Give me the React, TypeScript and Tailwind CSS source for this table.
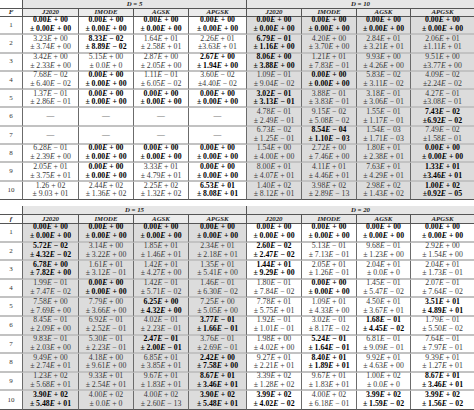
import React from 'react';

// each cell: "mean|std", leading "*" = best (bold)
const Z = '*0.00E + 00|± 0.00E + 00';
const DASH = '—';

const D5: string[][] = [
  [Z, Z, Z, Z],
  ['3.23E + 00|± 3.74E + 00', '*8.33E − 02|± 8.89E − 02', '1.64E + 01|± 2.58E + 01', '2.26E + 01|±3.63E + 01'],
  ['3.42E + 00|± 2.33E + 00', '5.15E + 00|± 0.0E + 0', '2.87E + 00|± 2.05E + 00', '*2.67E + 00|± 1.94E + 00'],
  ['7.68E − 02|± 6.40E − 02', Z, '1.11E − 01|± 6.05E − 02', '3.60E − 02|±4.40E − 02'],
  ['1.37E − 01|± 2.86E − 01', Z, Z, Z],
  [DASH, DASH, DASH, DASH],
  [DASH, DASH, DASH, DASH],
  ['6.28E − 01|± 2.39E + 00', Z, Z, Z],
  ['2.05E + 01|± 3.75E + 01', Z, '3.33E + 01|± 4.79E + 01', Z],
  ['1.26 + 02|± 9.03 + 01', '2.44E + 02|± 1.36E + 02', '2.25E + 02|± 1.32E + 02', '*6.53E + 01|± 8.08E + 01'],
];

const D10: string[][] = [
  [Z, Z, Z, Z],
  ['*6.79E − 01|± 1.16E + 00', '4.20E + 00|± 3.70E + 00', '2.84E + 01|± 3.21E + 01', '2.06E + 01|±1.11E + 01'],
  ['*8.06E + 00|± 3.88E + 00', '1.21E + 01|± 7.83E − 01', '9.93E + 00|± 4.26E + 00', '9.51E + 00|±3.77E + 00'],
  ['1.09E − 01|± 9.04E − 02', Z, '5.83E − 02|± 3.11E − 02', '4.09E − 02|±2.24E − 02'],
  ['*3.02E − 01|± 3.13E − 01', '3.88E − 01|± 3.83E − 01', '3.18E − 01|± 3.06E − 01', '4.27E − 01|±3.08E − 01'],
  ['4.78E − 01|± 2.49E − 01', '9.15E − 02|± 5.08E − 02', '1.55E − 01|± 1.17E − 01', '*7.43E − 02|±6.92E − 02'],
  ['6.73E − 02|± 1.25E − 01', '*8.54E − 04|± 1.10E − 03', '1.54E − 03|± 1.71E − 03', '7.49E − 02|±1.58E − 01'],
  ['1.54E + 00|± 4.00E + 00', '2.72E + 00|± 7.46E + 00', '1.80E + 01|± 2.38E + 01', Z],
  ['8.00E + 01|± 4.07E + 01', '4.11E + 01|± 4.46E + 01', '7.63E + 01|± 4.29E + 01', '*1.33E + 01|±3.46E + 01'],
  ['1.40E + 02|± 8.12E + 01', '3.98E + 02|± 2.89E − 13', '2.98E + 02|± 1.43E + 02', '*1.00E + 02|±0.92E − 05'],
];

const D15: string[][] = [
  [Z, Z, Z, Z],
  ['*5.72E − 02|± 4.32E − 02', '3.14E + 00|± 3.22E + 00', '1.85E + 01|± 1.46E + 01', '2.34E + 01|± 2.18E + 01'],
  ['*6.78E + 00|± 7.82E + 00', '1.61E + 01|± 3.12E − 01', '1.42E + 01|± 4.27E + 00', '1.35E + 01|± 5.41E + 00'],
  ['1.99E − 01|± 7.47E − 02', Z, '1.42E − 01|± 5.71E − 02', '1.46E − 01|± 6.30E − 02'],
  ['7.58E + 00|± 7.69E + 00', '7.79E + 00|± 3.66E + 00', '*6.25E + 00|± 4.32E + 00', '7.25E + 00|± 5.05E + 00'],
  ['8.45E − 01|± 2.09E + 00', '6.92E − 01|± 2.52E − 01', '4.02E − 01|± 2.23E − 01', '*3.77E − 01|± 1.66E − 01'],
  ['9.83E − 01|± 2.03E + 00', '5.30E − 01|± 2.23E − 01', '*2.47E − 01|± 2.00E − 01', '3.76E − 01|± 2.69E − 01'],
  ['9.49E + 00|± 2.74E + 01', '4.18E + 00|± 9.61E + 00', '6.85E + 01|± 3.85E + 01', '*2.42E + 00|± 7.58E + 00'],
  ['1.23E + 02|± 5.68E + 01', '9.33E + 01|± 2.54E + 01', '9.67E + 01|± 1.83E + 01', '*8.67E + 01|± 3.46E + 01'],
  ['*3.90E + 02|± 5.48E + 01', '4.00E + 02|± 0.0E + 0', '4.00E + 02|± 2.60E − 13', '*3.90E + 02|± 5.48E + 01'],
];

const D20: string[][] = [
  [Z, Z, Z, Z],
  ['*2.60E − 02|± 2.47E − 02', '5.13E − 01|± 7.13E − 01', '9.68E − 01|± 1.23E + 00', '2.92E + 00|± 1.54E + 00'],
  ['*1.44E + 01|± 9.29E + 00', '2.05E + 01|± 1.26E − 01', '2.04E + 01|± 0.0E + 0', '2.04E + 01|± 1.73E − 01'],
  ['1.80E − 01|± 7.84E − 02', Z, '1.45E − 01|± 5.47E − 02', '2.07E − 01|± 7.64E − 02'],
  ['7.78E + 01|± 5.75E + 01', '1.09E + 01|± 4.33E + 00', '4.50E + 01|± 3.67E + 01', '*3.51E + 01|± 4.89E + 01'],
  ['1.92E − 01|± 1.01E − 01', '3.02E − 01|± 8.17E − 02', '*1.68E − 01|± 4.45E − 02', '1.79E − 01|± 5.50E − 02'],
  ['1.98E + 00|± 4.02E + 00', '*5.24E − 01|± 1.64E − 01', '6.81E − 01|± 9.09E − 01', '7.64E − 01|± 7.97E − 01'],
  ['9.27E + 01|± 2.21E + 01', '*8.40E + 01|± 1.89E + 01', '9.92E + 01|± 4.63E + 00', '9.39E + 01|± 1.27E + 01'],
  ['3.39E + 02|± 1.28E + 02', '9.67E + 01|± 1.83E + 01', '1.00E + 02|± 0.0E + 0', '*8.67E + 01|± 3.46E + 01'],
  ['*3.99E + 02|± 4.02E − 02', '4.00E + 02|± 6.18E − 01', '*3.99E + 02|± 1.59E − 02', '*3.99E + 02|± 1.56E − 02'],
];

const ALGOS = ['J2020', 'IMODE', 'AGSK', 'APGSK'];

// italic E like the math font in the paper
const Num: React.FC<{ text: string }> = ({ text }) => {
  const parts = text.split('E');
  return (
    <>
      {parts.map((p, i) => (
        <React.Fragment key={i}>
          {i > 0 && <i>E</i>}
          {p}
        </React.Fragment>
      ))}
    </>
  );
};

const Value: React.FC<{ raw: string; last: boolean; shaded: boolean; edge?: boolean }> = ({ raw, last, shaded, edge }) => {
  const bold = raw.startsWith('*');
  const [mean, std] = (bold ? raw.slice(1) : raw).split('|');
  return (
    <div
      className={`flex flex-col items-center justify-center leading-[8.8px] text-[7.8px] border-r border-[#6b6b6b] ${
        last ? 'border-b border-b-[#555]' : 'border-b-2 border-b-[#c2c2c2]'
      } ${shaded ? 'bg-[#dcdcdc]' : 'bg-white'} ${edge ? 'border-r-0' : ''} ${
        bold ? 'font-bold text-black' : 'text-[#3a3a3a]'
      }`}
    >
      {std === undefined ? (
        <span className="text-[#777]">{mean}</span>
      ) : (
        <>
          <span className="whitespace-nowrap"><Num text={mean} /></span>
          <span className="whitespace-nowrap"><Num text={std} /></span>
        </>
      )}
    </div>
  );
};

interface SectionProps {
  left: { d: string; rows: string[][]; shaded: boolean };
  right: { d: string; rows: string[][]; shaded: boolean; headShaded: boolean };
  fLabel: string;
  rowsClass: string;
}

const Section: React.FC<SectionProps> = ({ left, right, fLabel, rowsClass }) => (
  <div className={`grid grid-cols-[23px_56px_55px_55px_58px_55px_55px_54px_63px] ${rowsClass}`}>
    {/* D row */}
    <div className="bg-white border-r border-b border-[#555]" />
    <div className="col-span-4 flex items-center justify-center bg-[#e6e6e6] border-r border-b border-[#555] text-[6.8px] italic font-bold text-[#222]">
      D = {left.d}
    </div>
    <div className="col-span-4 flex items-center justify-center bg-[#e6e6e6] border-b border-[#555] text-[6.8px] italic font-bold text-[#222]">
      D = {right.d}
    </div>

    {/* header row */}
    <div className="flex items-center justify-center bg-white border-r border-b border-[#555] text-[7px] italic font-bold">
      {fLabel}
    </div>
    {ALGOS.map((a) => (
      <div
        key={'l' + a}
        className="flex items-center justify-center bg-[#ececec] border-r border-b border-[#555] text-[6.8px] italic font-bold text-[#222]"
      >
        {a}
      </div>
    ))}
    {ALGOS.map((a, i) => (
      <div
        key={'r' + a}
        className={`flex items-center justify-center border-b border-[#555] text-[6.8px] italic font-bold text-[#222] ${
          right.headShaded ? 'bg-[#e6e6e6]' : 'bg-white'
        } ${i < 3 ? 'border-r' : ''}`}
      >
        {a}
      </div>
    ))}

    {/* data rows */}
    {left.rows.map((row, r) => {
      const last = r === left.rows.length - 1;
      return (
        <React.Fragment key={r}>
          <div
            className={`flex items-center justify-center bg-white text-[7px] text-[#333] border-r border-[#6b6b6b] ${
              last ? 'border-b border-b-[#555]' : 'border-b-2 border-b-[#c2c2c2]'
            }`}
          >
            {r + 1}
          </div>
          {row.map((c, i) => (
            <Value key={'l' + i} raw={c} last={last} shaded={left.shaded} />
          ))}
          {right.rows[r].map((c, i) => (
            <Value key={'r' + i} raw={c} last={last} shaded={right.shaded} edge={i === 3} />
          ))}
        </React.Fragment>
      );
    })}
  </div>
);

export default function App() {
  return (
    <div className="w-[474px] h-[410px] overflow-hidden bg-white flex flex-col gap-[6px] font-['Liberation_Serif',serif] text-[#222]">
      <Section
        left={{ d: '5', rows: D5, shaded: false }}
        right={{ d: '10', rows: D10, shaded: true, headShaded: true }}
        fLabel="F"
        rowsClass="grid-rows-[9px_8px_repeat(10,18.3px)]"
      />
      <Section
        left={{ d: '15', rows: D15, shaded: true }}
        right={{ d: '20', rows: D20, shaded: false, headShaded: true }}
        fLabel="f"
        rowsClass="grid-rows-[9px_9px_repeat(10,18.6px)]"
      />
    </div>
  );
}
